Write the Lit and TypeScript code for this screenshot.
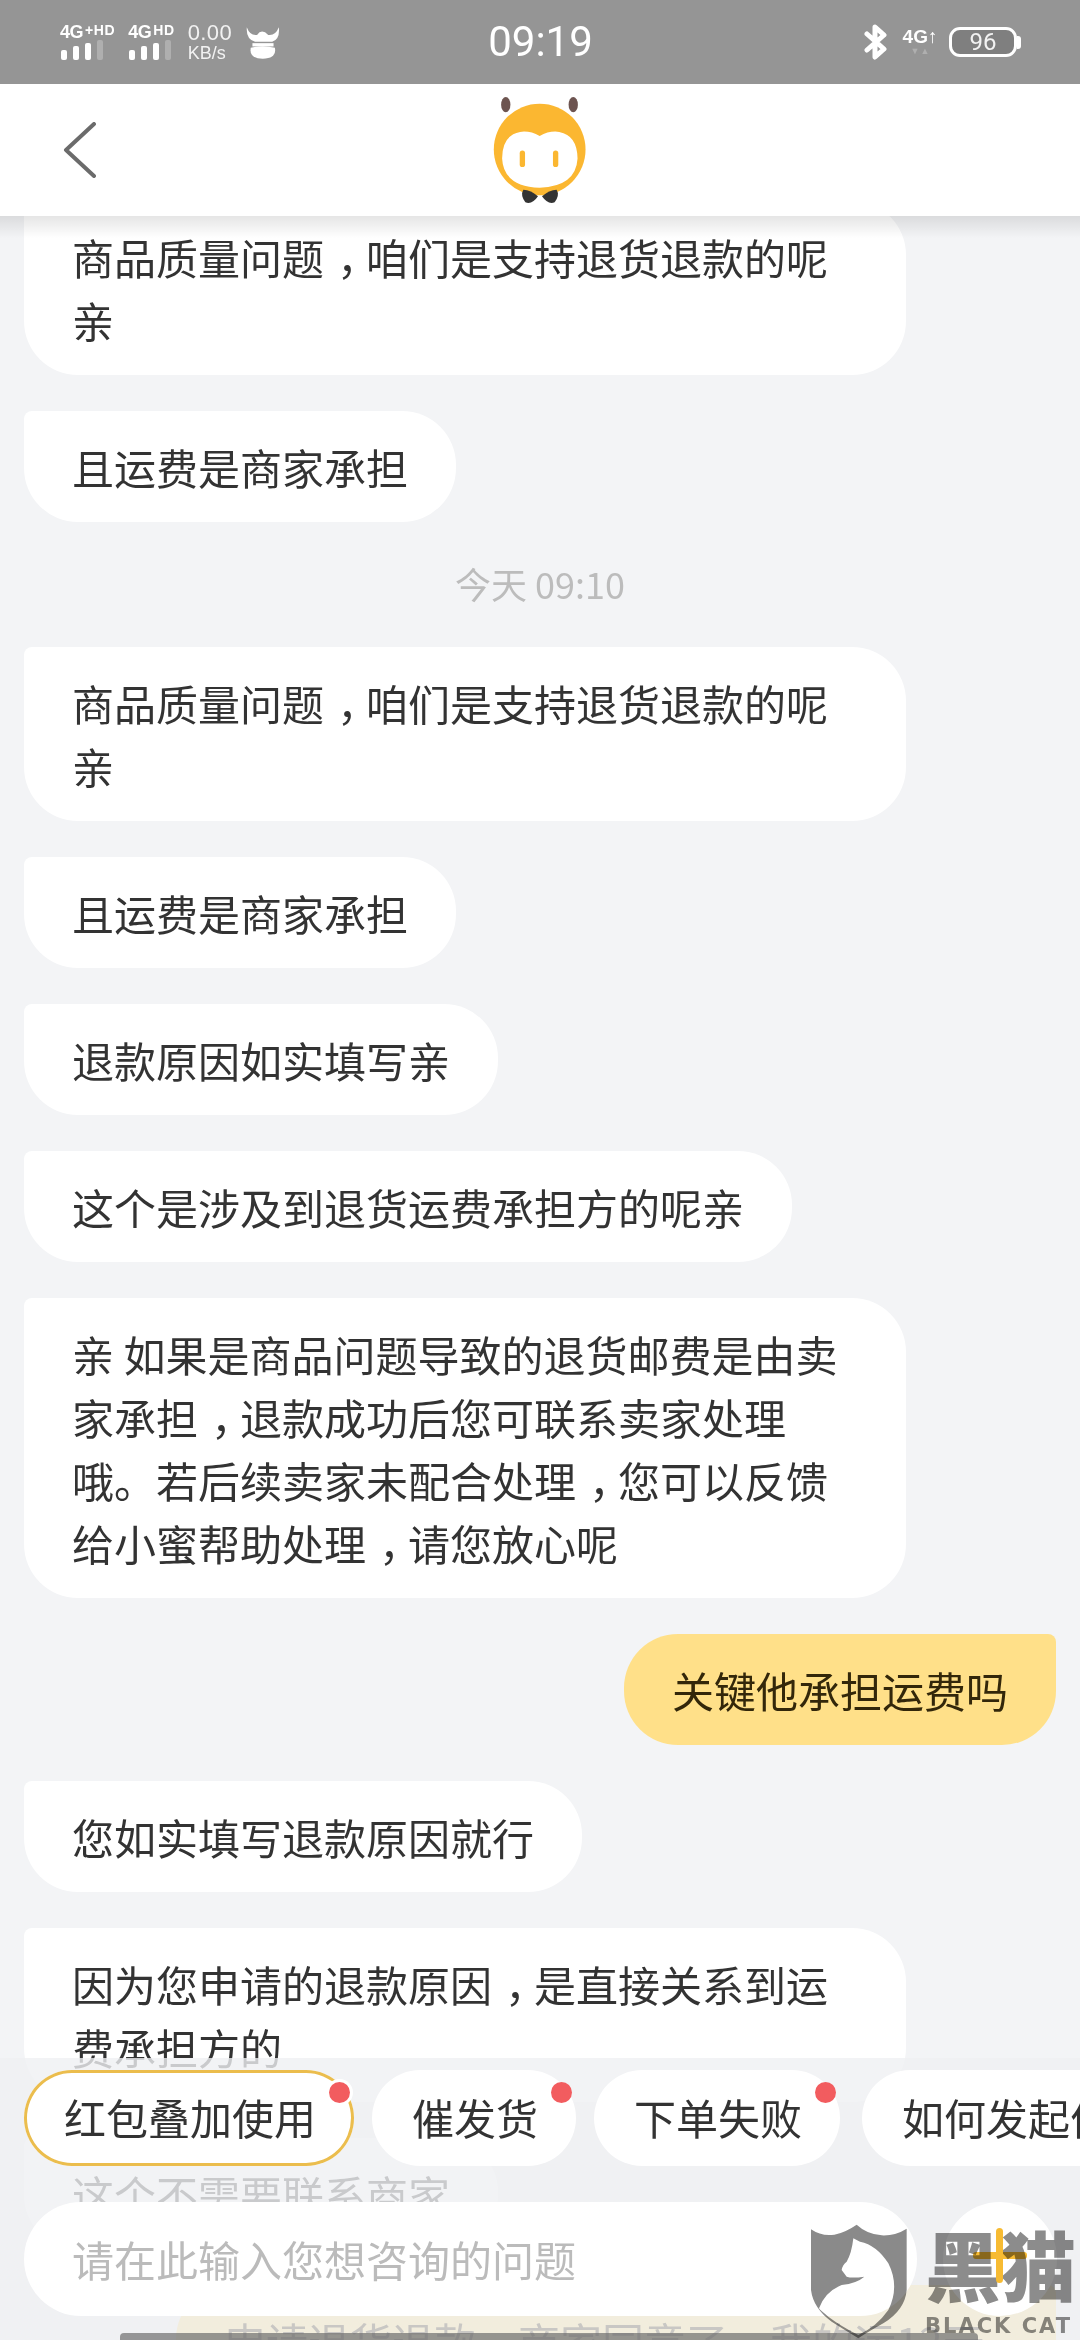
import { LitElement, html, css } from "lit";
import { customElement } from "lit/decorators.js";
import { classMap } from "lit/directives/class-map.js";

type Msg =
  | { kind: "in" | "out"; lines: string[] }
  | { kind: "time"; text: string };

const MESSAGES: Msg[] = [
  { kind: "in", lines: ["商品质量问题，咱们是支持退货退款的呢", "亲"] },
  { kind: "in", lines: ["且运费是商家承担"] },
  { kind: "time", text: "今天 09:10" },
  { kind: "in", lines: ["商品质量问题，咱们是支持退货退款的呢", "亲"] },
  { kind: "in", lines: ["且运费是商家承担"] },
  { kind: "in", lines: ["退款原因如实填写亲"] },
  { kind: "in", lines: ["这个是涉及到退货运费承担方的呢亲"] },
  {
    kind: "in",
    lines: [
      "亲 如果是商品问题导致的退货邮费是由卖",
      "家承担，退款成功后您可联系卖家处理",
      "哦。若后续卖家未配合处理，您可以反馈",
      "给小蜜帮助处理，请您放心呢",
    ],
  },
  { kind: "out", lines: ["关键他承担运费吗"] },
  { kind: "in", lines: ["您如实填写退款原因就行"] },
  { kind: "in", lines: ["因为您申请的退款原因，是直接关系到运", "费承担方的"] },
  { kind: "in", lines: ["这个不需要联系商家"] },
  { kind: "out", lines: ["申请退货退款，商家同意了，我的运12元", "运费谁承担"] },
];

const CHIPS = [
  { label: "红包叠加使用", dot: true, active: true },
  { label: "催发货", dot: true, active: false },
  { label: "下单失败", dot: true, active: false },
  { label: "如何发起价保", dot: false, active: false },
];

// the app's font sets the full-width comma in the middle of its cell
const withCommas = (text: string) =>
  text.split("，").map((part, i) => (i === 0 ? part : html`<span class="comma">，</span>${part}`));

const signal = (sup: string) => html`
  <div class="sig">
    <div class="sig-label"><span>4G</span><small>${sup}</small></div>
    <div class="bars">
      <i style="height:10px"></i><i style="height:14px"></i><i style="height:17px"></i><i class="off" style="height:20px"></i>
    </div>
  </div>
`;

const bullIcon = html`
  <svg class="bull" width="35" height="33" viewBox="590 30 105 100" fill="#fff">
    <path d="M595 34Q604 60 626 57Q640 36 660 57Q682 60 692 34Q696 70 672 78L620 78Q592 70 595 34Z" />
    <path d="M612 82H676V92H612Z" />
    <path d="M607 96Q643 86 680 96Q686 128 643 129Q601 128 607 96Z" />
  </svg>
`;

const logo = html`
  <svg class="logo" width="100" height="117" viewBox="150 62 300 352">
    <ellipse cx="197" cy="100" rx="14" ry="23" fill="#6d5450" />
    <ellipse cx="400" cy="100" rx="14" ry="23" fill="#6d5450" />
    <circle cx="299" cy="235" r="138" fill="#fbb731" />
    <path d="M299 194Q270 178 240 182Q186 192 186 262Q190 346 299 350Q408 346 413 262Q412 192 358 182Q328 178 299 194Z" fill="#fff" />
    <rect x="239" y="238" width="16" height="50" rx="8" fill="#fbb731" />
    <rect x="339" y="238" width="16" height="50" rx="8" fill="#fbb731" />
    <path d="M294 376Q272 356 250 356Q240 372 256 394Q276 402 294 376Z" fill="#333" />
    <path d="M306 376Q328 356 350 356Q360 372 344 394Q324 402 306 376Z" fill="#333" />
  </svg>
`;

@customElement("app-root")
export class AppRoot extends LitElement {
  static styles = css`
    :host {
      display: block;
      font-family: "Noto Sans CJK SC", "Noto Sans", sans-serif;
      color: #333;
    }
    .screen {
      position: relative;
      display: flex;
      flex-direction: column;
      width: 1080px;
      height: 2340px;
      overflow: hidden;
      background: #f3f4f6;
    }

    .status {
      flex: none;
      display: grid;
      grid-template-columns: 1fr auto 1fr;
      align-items: center;
      height: 84px;
      padding: 0 59px 0 60px;
      box-sizing: border-box;
      background: #959595;
      color: #fff;
      font-family: Roboto, "Liberation Sans", sans-serif;
    }
    .status-left,
    .status-right {
      display: flex;
      align-items: center;
    }
    .status-left {
      gap: 13px;
    }
    .status-right {
      justify-content: flex-end;
    }
    .sig {
      display: flex;
      flex-direction: column;
      gap: 1px;
    }
    .sig-label {
      display: flex;
      align-items: flex-start;
      height: 14px;
      font: bold 18px/14px "Liberation Sans", sans-serif;
      letter-spacing: -0.5px;
    }
    .sig-label small {
      font-size: 14px;
      line-height: 11px;
      margin-left: 2px;
      letter-spacing: 0.6px;
    }
    .bars {
      display: flex;
      align-items: flex-end;
      gap: 6px;
      height: 20px;
      padding-left: 1px;
    }
    .bars i {
      display: block;
      width: 6px;
      border-radius: 2px;
      background: #fff;
    }
    .bars i.off {
      background: rgba(255, 255, 255, 0.25);
    }
    .speed {
      display: flex;
      flex-direction: column;
      font-family: "Liberation Sans", sans-serif;
      font-size: 22px;
      line-height: 22px;
      letter-spacing: 0.4px;
      color: #f2f2f2;
    }
    .speed span + span {
      font-size: 18px;
      line-height: 18px;
      letter-spacing: 0;
    }
    .clock {
      font-size: 42px;
      line-height: 84px;
      font-weight: 400;
    }
    .net {
      display: flex;
      flex-direction: column;
      align-items: center;
      width: 40px;
      margin: 0 9px 0 12px;
      font: bold 19px/18px "Liberation Sans", sans-serif;
    }
    .net-arrows {
      display: flex;
      gap: 1px;
      font-size: 9px;
      line-height: 10px;
      color: rgba(255, 255, 255, 0.25);
    }
    .battery {
      display: flex;
      align-items: center;
    }
    .battery-body {
      display: flex;
      align-items: center;
      justify-content: center;
      width: 68px;
      height: 30px;
      box-sizing: border-box;
      border: 3px solid #fff;
      border-radius: 11px;
      background: #7f7f7f;
      font-size: 24px;
      line-height: 24px;
      color: #f2f2f2;
    }
    .battery-nub {
      width: 4px;
      height: 13px;
      border-radius: 0 3px 3px 0;
      background: #fff;
    }

    .header {
      position: relative;
      z-index: 1;
      flex: none;
      display: grid;
      grid-template-columns: 1fr auto 1fr;
      align-items: center;
      height: 132px;
      background: #fff;
    }
    .header::after {
      content: "";
      position: absolute;
      left: 0;
      right: 0;
      top: 100%;
      height: 22px;
      background: linear-gradient(180deg, rgba(0, 0, 0, 0.1), rgba(0, 0, 0, 0));
    }
    .back {
      margin-left: 62px;
      display: block;
    }
    .logo {
      display: block;
    }

    .chat {
      flex: 1;
      min-height: 0;
      overflow: hidden;
    }
    .list {
      display: flex;
      flex-direction: column;
      gap: 36px;
      margin-top: -15px;
      padding: 0 24px;
    }
    .bubble {
      flex: none;
      box-sizing: border-box;
      max-width: 882px;
      width: fit-content;
      padding: 24px 48px;
      font-size: 42px;
      line-height: 63px;
      white-space: nowrap;
      background: #fff;
      border-radius: 8px 54px 54px 54px;
    }
    .bubble.wide {
      width: 100%;
    }
    .bubble.out {
      align-self: flex-end;
      max-width: 880px;
      background: #ffe089;
      color: #33270a;
      border-radius: 54px 8px 54px 54px;
    }
    .comma {
      padding-left: 13px;
      letter-spacing: -13px;
    }
    .time {
      flex: none;
      height: 53px;
      text-align: center;
      font-size: 36px;
      line-height: 50px;
      color: #bcbcbc;
    }

    .dock {
      position: absolute;
      left: 0;
      right: 0;
      bottom: 0;
      height: 282px;
      box-sizing: border-box;
      padding-top: 12px;
      display: flex;
      flex-direction: column;
      background: rgba(239, 240, 242, 0.8);
    }
    .chips {
      flex: none;
      display: flex;
      gap: 18px;
      padding-left: 24px;
      overflow: hidden;
    }
    .chip {
      position: relative;
      flex: none;
      height: 96px;
      padding: 0 38px 0 40px;
      border-radius: 48px;
      background: #fff;
      font-size: 42px;
      line-height: 94px;
    }
    .chip:last-child {
      margin-left: 4px;
    }
    .chip.active {
      box-shadow: inset 0 0 0 3px #ebbd4d;
    }
    .dot {
      position: absolute;
      top: 12px;
      right: 4px;
      width: 21px;
      height: 21px;
      border-radius: 50%;
      background: #f25c5f;
    }
    .chip.active .dot {
      box-shadow: 0 0 0 3px #fff;
    }
    .input-row {
      flex: none;
      display: flex;
      gap: 26px;
      margin: 36px 23px 0 24px;
    }
    .input {
      flex: 1;
      height: 114px;
      padding-left: 48px;
      border-radius: 57px;
      background: #fff;
      font-size: 42px;
      line-height: 114px;
      color: #bbb;
    }
    .plus {
      position: relative;
      flex: none;
      width: 114px;
      height: 114px;
      border-radius: 50%;
      background: #fff;
    }
    .plus::before {
      content: "";
      position: absolute;
      left: 30px;
      top: 50px;
      width: 54px;
      height: 7px;
      border-radius: 3px;
      background: #f7bb33;
    }
    .home-bar {
      flex: none;
      width: 858px;
      height: 7px;
      margin: 17px 0 0 120px;
      border-radius: 4px 4px 0 0;
      background: rgba(110, 110, 110, 0.7);
    }

    .mark {
      position: absolute;
      left: 805px;
      top: 2220px;
      width: 275px;
      height: 120px;
      display: flex;
      mix-blend-mode: multiply;
    }
    .mark-text {
      display: flex;
      flex-direction: column;
      margin-left: 10px;
      color: #8c8c8c;
    }
    .mark-zh {
      margin-top: 4px;
      height: 78px;
      font-size: 76px;
      line-height: 78px;
      font-weight: 900;
      letter-spacing: -1px;
      white-space: nowrap;
    }
    .mark-en {
      margin-top: 13px;
      font: bold 21px/22px "DejaVu Sans", sans-serif;
      letter-spacing: 2px;
      white-space: nowrap;
    }
    .mark-stroke {
      position: absolute;
      left: 996px;
      top: 2228px;
      width: 7px;
      height: 55px;
      border-radius: 4px;
      background: #f7bb33;
    }
  `;

  renderMsg(m: Msg) {
    if (m.kind === "time") return html`<div class="time">${m.text}</div>`;
    const classes = { bubble: true, out: m.kind === "out", wide: m.lines.length > 1 };
    return html`<div class=${classMap(classes)}>${m.lines.map((l) => html`<div>${withCommas(l)}</div>`)}</div>`;
  }

  render() {
    return html`
      <div class="screen">
        <div class="status">
          <div class="status-left">
            ${signal("+HD")} ${signal("HD")}
            <div class="speed"><span>0.00</span><span>KB/s</span></div>
            ${bullIcon}
          </div>
          <div class="clock">09:19</div>
          <div class="status-right">
            <svg width="24" height="36" viewBox="0 0 24 36" fill="none" stroke="#fff" stroke-width="5" stroke-linejoin="round" stroke-linecap="round">
              <path d="M3 10L20 25L11 33V3L20 11L3 26" />
            </svg>
            <div class="net">
              <span>4G↑</span>
              <div class="net-arrows"><span>▼</span><span>▲</span></div>
            </div>
            <div class="battery">
              <div class="battery-body">96</div>
              <div class="battery-nub"></div>
            </div>
          </div>
        </div>

        <div class="header">
          <svg class="back" width="36" height="56" viewBox="0 0 36 56" fill="none" stroke="#6b6b6b" stroke-width="4" stroke-linejoin="round" stroke-linecap="round">
            <path d="M32 2L4 28L32 54" />
          </svg>
          ${logo}
          <div></div>
        </div>

        <div class="chat">
          <div class="list">${MESSAGES.map((m) => this.renderMsg(m))}</div>
        </div>

        <div class="dock">
          <div class="chips">
            ${CHIPS.map(
              (c) => html`
                <div class=${classMap({ chip: true, active: c.active })}>
                  ${c.label}${c.dot ? html`<span class="dot"></span>` : ""}
                </div>
              `
            )}
          </div>
          <div class="input-row">
            <div class="input">请在此输入您想咨询的问题</div>
            <div class="plus"></div>
          </div>
          <div class="home-bar"></div>
        </div>

        <div class="mark">
          <svg width="110" height="120" viewBox="0 0 330 360">
            <path d="M18 28Q50 50 88 44Q120 38 155 14Q185 42 230 46Q270 48 305 26L305 210Q300 270 235 310Q190 335 160 355Q120 330 80 305Q25 265 18 210Z" fill="#8a8a8a" />
            <path d="M145 55L165 65Q215 75 250 130Q285 200 250 270Q215 320 160 345Q110 320 70 290Q45 270 42 265Q60 215 110 195Q155 190 178 170Q140 175 125 170L110 150Q112 135 125 125Q140 100 145 55Z" fill="#fff" />
          </svg>
          <div class="mark-text">
            <div class="mark-zh">黑猫</div>
            <div class="mark-en">BLACK CAT</div>
          </div>
        </div>
        <div class="mark-stroke"></div>
      </div>
    `;
  }
}
